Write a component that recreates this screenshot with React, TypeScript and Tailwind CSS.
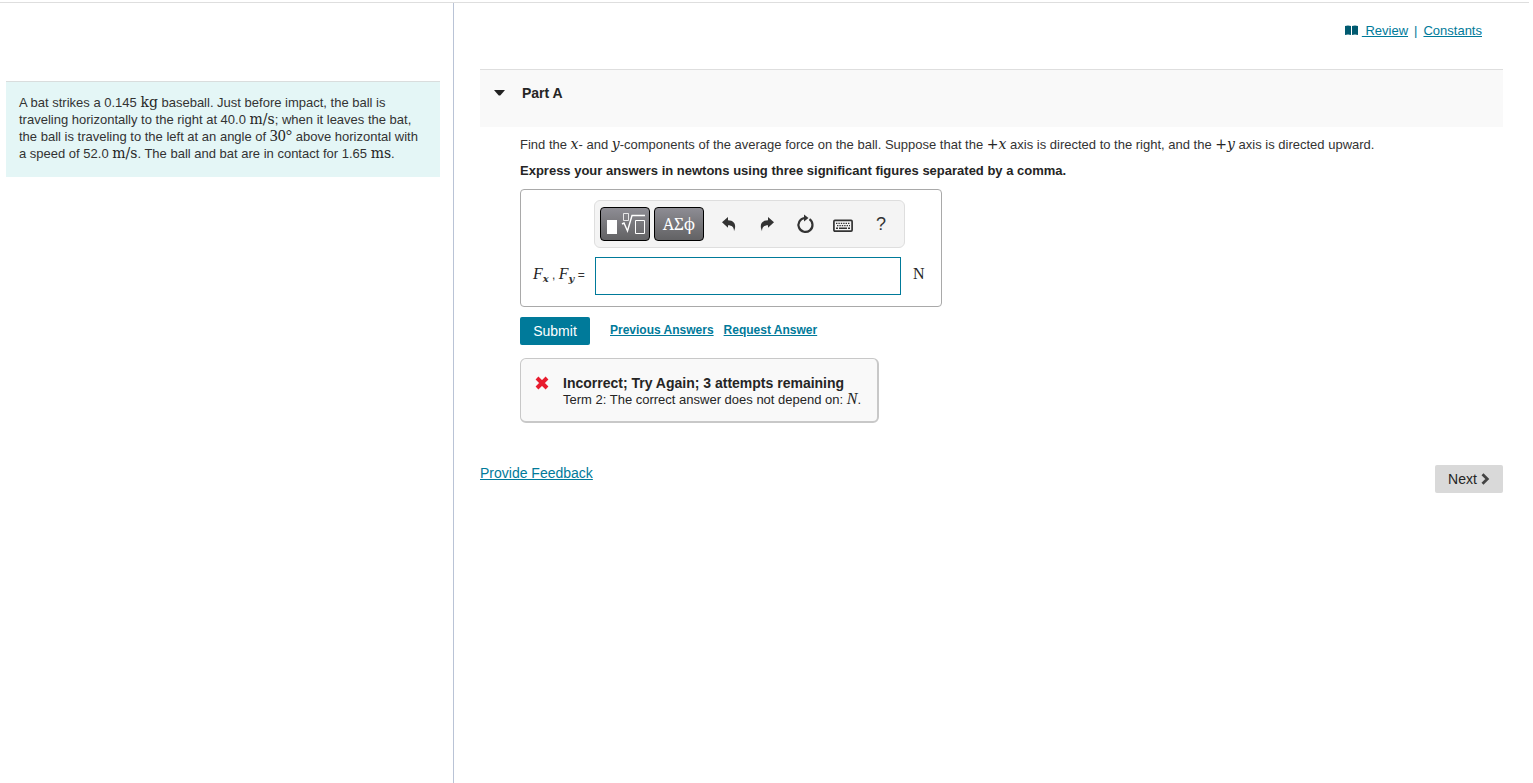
import React, { useState } from "react";

// Capitals and digits use the book face, lowercase symbols the wider one
const MathText = ({ children, italic = false }: { children: React.ReactNode; italic?: boolean }) => (
  <span
    className={`font-['Liberation_Serif',serif] text-[16px] leading-none text-[#252525] ${
      italic ? "italic" : ""
    }`}
  >
    {children}
  </span>
);

const MathSymbol = ({ children, italic = false }: { children: React.ReactNode; italic?: boolean }) => (
  <span
    className={`font-['DejaVu_Serif',serif] text-[14px] leading-none text-[#252525] ${
      italic ? "italic" : ""
    }`}
  >
    {children}
  </span>
);

const ProblemPanel = () => {
  return (
    <aside className="w-[454px] shrink-0 border-r border-[#b9c3d6] pt-[78px] pr-[13px] pl-1.5">
      <div className="border-t border-[#d9dddd] bg-[#e4f6f6] px-[13px] pt-3 pb-[15px]">
        <p className="text-[13px] leading-[17px]">
          A bat strikes a 0.145 <MathSymbol>kg</MathSymbol> baseball. Just before impact, the ball is
          <br />
          traveling horizontally to the right at 40.0 <MathSymbol>m/s</MathSymbol>; when it leaves the bat,
          <br />
          the ball is traveling to the left at an angle of <MathText>30°</MathText> above horizontal with
          <br />
          a speed of 52.0 <MathSymbol>m/s</MathSymbol>. The ball and bat are in contact for 1.65{" "}
          <MathSymbol>ms</MathSymbol>.
        </p>
      </div>
    </aside>
  );
};

const toolButton = "flex h-[34px] w-[38px] items-center justify-center text-[#333]";
const darkButton =
  "flex h-[34px] w-[50px] items-center justify-center rounded-[4px] border border-black bg-linear-to-b from-[#8e8d94] to-[#626264] text-white";

const Toolbar = ({ onClear }: { onClear: () => void }) => {
  return (
    <div className="flex h-12 w-[311px] items-center rounded-[6px] border border-[#dedede] bg-[#f4f4f4] pl-[5px]">
      <button className={darkButton} aria-label="Templates">
        <svg width="40" height="26" viewBox="0 0 40 26" fill="none" stroke="#fff">
          <rect x="2" y="9" width="10" height="14" fill="#fff" stroke="none" />
          <path d="M18.5 2.5h5v7h-5z" strokeOpacity=".8" />
          <path d="M17 13l2-1 3.5 8L27 4.5h13" strokeWidth="1.4" />
          <path d="M30.5 9.5h9v13h-9z" />
        </svg>
      </button>
      <button className={`${darkButton} mr-1.5 ml-1 font-['Noto_Serif','DejaVu_Serif',serif] text-[16px]`}>
        ΑΣϕ
      </button>
      <button className={toolButton} aria-label="Undo">
        <svg width="16" height="16" viewBox="0 0 16 16" fill="currentColor">
          <path d="M1 6.3 7 1v3.2c5 0 8 3 7 8l-1 3c0-4-2-6-6-6v2.6z" />
        </svg>
      </button>
      <button className={toolButton} aria-label="Redo">
        <svg width="16" height="16" viewBox="0 0 16 16" fill="currentColor">
          <path d="M15 6.3 9 1v3.2c-5 0-8 3-7 8l1 3c0-4 2-6 6-6v2.6z" />
        </svg>
      </button>
      <button className={toolButton} aria-label="Reset" onClick={onClear}>
        <svg width="18" height="20" viewBox="0 0 18 20" fill="none">
          <path d="M13.5 5.2A7 7 0 1 1 8.5 4" stroke="currentColor" strokeWidth="2.2" />
          <path d="M8 0.5v7L12.5 4z" fill="currentColor" />
        </svg>
      </button>
      <button className={toolButton} aria-label="Keyboard">
        <svg width="20" height="18" viewBox="0 0 20 18" fill="none" stroke="currentColor">
          <rect x="0.9" y="5.4" width="18.2" height="10.7" rx="1" strokeWidth="1.7" />
          <path d="M3 8.4h14M4 10.7h13" strokeWidth="1.3" strokeDasharray="1.4 1" />
          <path d="M3 13.3h2M6 13.3h8M15 13.3h2" strokeWidth="1.5" />
        </svg>
      </button>
      <button className={`${toolButton} text-[18px]`} aria-label="Help">
        ?
      </button>
    </div>
  );
};

const AnswerBox = () => {
  const [answer, setAnswer] = useState("");

  return (
    <div className="w-[422px] max-w-full rounded-[4px] border border-[#a9a9a9] pt-2.5 pb-[11px]">
      <div className="pl-[73px]">
        <Toolbar onClear={() => setAnswer("")} />
      </div>
      <div className="mt-[9px] flex items-center">
        <label htmlFor="answer" className="w-[74px] pb-0.5 pl-3 text-[12px] whitespace-nowrap">
          <MathText italic>F</MathText>
          <sub className="font-['DejaVu_Serif',serif] text-[10px] font-bold italic">x</sub> ,{" "}
          <MathText italic>F</MathText>
          <sub className="font-['DejaVu_Serif',serif] text-[10px] font-bold italic">y</sub> =
        </label>
        <input
          id="answer"
          type="text"
          value={answer}
          onChange={(e) => setAnswer(e.target.value)}
          className="h-[38px] w-[306px] border border-[#007a9a] bg-white px-2 outline-none"
        />
        <span className="pb-0.5 pl-3">
          <MathText>N</MathText>
        </span>
      </div>
    </div>
  );
};

const App = () => {
  const [open, setOpen] = useState(true);

  return (
    <div className="flex min-h-screen flex-col bg-white pt-0.5 font-['Liberation_Sans',Arial,sans-serif] text-[13px] text-[#333]">
      <div className="mr-1 border-t border-[#dedede]" />
      <div className="flex flex-1">
        <ProblemPanel />

        <main className="min-w-0 flex-1 pr-[30px] pl-[26px]">
          {/* Top links */}
          <nav className="flex h-[66px] items-start justify-end pt-5 pr-[21px] leading-4">
            <svg width="13" height="11" viewBox="0 0 13 11" className="mt-0.5 mr-1" fill="#005a70">
              <path d="M0 1q3-1 6 0v9q-3-1-6 0zM7 1q3-1 6 0v9q-3-1-6 0z" />
            </svg>
            <a href="#review" className="whitespace-pre text-[#007a9a] underline">{" Review"}</a>
            <span className="px-1.5 text-[#007a9a]">|</span>
            <a href="#constants" className="text-[#007a9a] underline">Constants</a>
          </nav>

          {/* Part header */}
          <button
            onClick={() => setOpen(!open)}
            className="flex h-[58px] w-full items-start border-t border-[#dedede] bg-[#f9f9f9] pt-3.5 pl-3.5 text-left"
          >
            <svg width="12" height="6" viewBox="0 0 12 6" className="mt-1.5" fill="#222">
              <path d="M0 0h11L6.5 5.2q-1 .8-2 0z" />
            </svg>
            <h2 className="ml-4 text-[14px] leading-[18px] font-bold text-[#252525]">Part A</h2>
          </button>

          {open && (
            <section className="pt-[9px] pl-10">
              <p className="leading-[17px]">
                Find the <MathSymbol italic>x</MathSymbol>- and <MathSymbol italic>y</MathSymbol>-components of
                the average force on the ball. Suppose that the <MathSymbol>+</MathSymbol>
                <MathSymbol italic>x</MathSymbol> axis is directed to the right, and the{" "}
                <MathSymbol>+</MathSymbol>
                <MathSymbol italic>y</MathSymbol> axis is directed upward.
              </p>
              <p className="mt-[9px] mb-2.5 leading-[17px] font-bold text-[#252525]">
                Express your answers in newtons using three significant figures separated by a comma.
              </p>

              <AnswerBox />

              <div className="mt-2.5 flex items-center">
                <button className="h-7 w-[70px] rounded-[2px] bg-[#007a9a] text-[14px] text-white">Submit</button>
                <a href="#previous" className="mb-0.5 ml-5 text-[12px] font-bold text-[#007a9a] underline">
                  Previous Answers
                </a>
                <a href="#request" className="mb-0.5 ml-2.5 text-[12px] font-bold text-[#007a9a] underline">
                  Request Answer
                </a>
              </div>

              {/* Feedback on the last attempt */}
              <div className="mt-[13px] flex h-[65px] w-[359px] max-w-full rounded-[6px] border border-r-2 border-b-2 border-[#c8c8c8] bg-[#f9f9f9] pt-4 pl-3.5">
                <svg width="14" height="14" viewBox="0 0 14 14" className="mt-px shrink-0" stroke="#e81c2e">
                  <path d="M2 2l10 10M12 2L2 12" strokeWidth="4" />
                </svg>
                <div className="ml-3.5 leading-4 text-[#252525]">
                  <h3 className="text-[14px] font-bold">Incorrect; Try Again; 3 attempts remaining</h3>
                  <p>
                    Term 2: The correct answer does not depend on: <MathText italic>N</MathText>.
                  </p>
                </div>
              </div>
            </section>
          )}

          <div className="mt-[41px] flex items-start justify-between">
            <a href="#feedback" className="text-[14px] leading-[18px] text-[#007a9a] underline">
              Provide Feedback
            </a>
            <button className="mt-px flex h-7 w-[68px] items-center justify-center gap-1 rounded-[2px] bg-[#d9d9d9] text-[14px] text-[#252525]">
              Next
              <svg width="9" height="12" viewBox="0 0 9 12" fill="none" stroke="#444">
                <path d="M1.5 1.2L6.3 6l-4.8 4.8" strokeWidth="2.8" />
              </svg>
            </button>
          </div>
        </main>
      </div>
    </div>
  );
};

export default App;
